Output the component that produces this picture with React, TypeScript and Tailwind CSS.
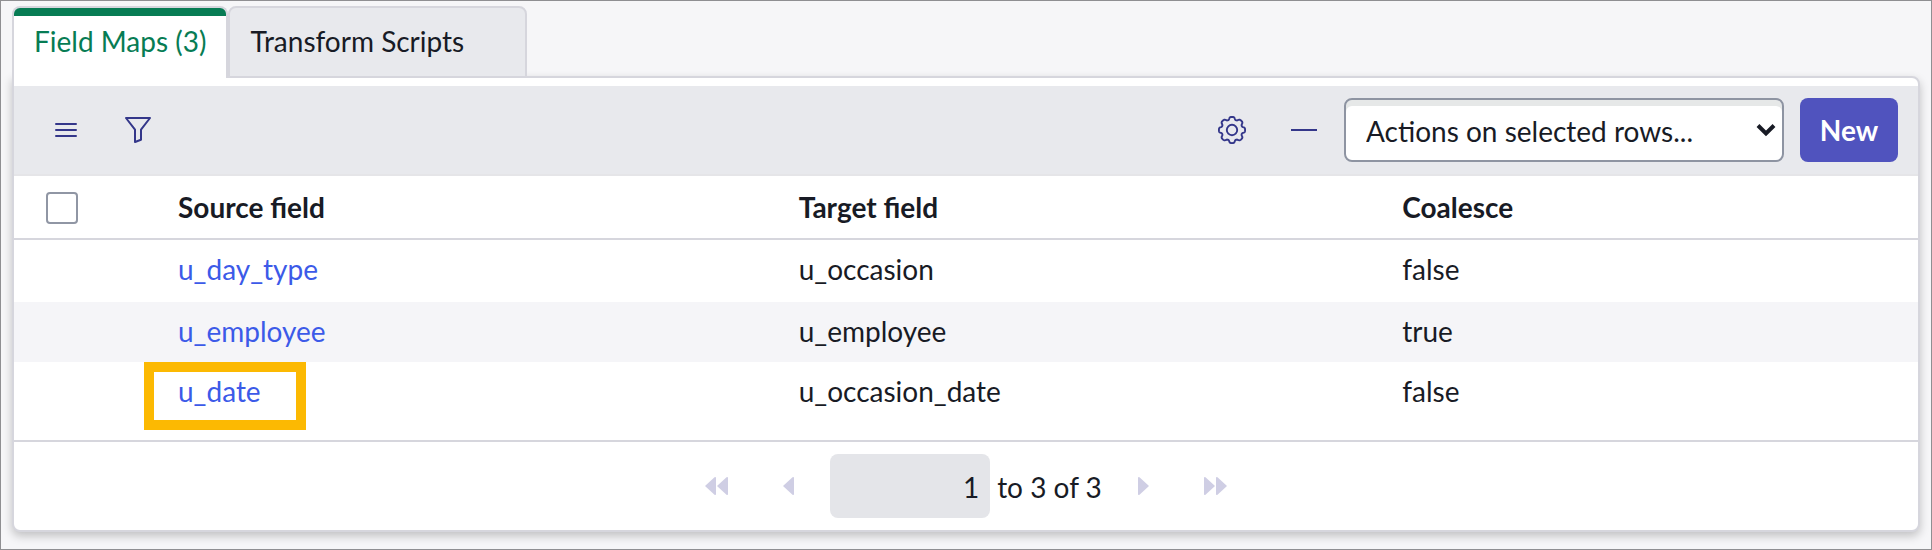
import React, { useState } from "react";
import clsx from "clsx";

type FieldMap = {
  source: string;
  target: string;
  coalesce: string;
  highlighted?: boolean;
};

const fieldMaps: FieldMap[] = [
  { source: "u_day_type", target: "u_occasion", coalesce: "false" },
  { source: "u_employee", target: "u_employee", coalesce: "true" },
  {
    source: "u_date",
    target: "u_occasion_date",
    coalesce: "false",
    highlighted: true,
  },
];

const tabs = [
  { id: "maps", label: "Field Maps (3)" },
  { id: "scripts", label: "Transform Scripts" },
];

// Outline of the cog: eight rounded teeth around the centre
const cogPoints = Array.from({ length: 144 }, (_, i) => {
  const angle = (i / 144) * Math.PI * 2;
  const radius = 11.7 + 1.4 * Math.tanh(1.8 * Math.cos(angle * 8) + 0.6);
  const x = 14 + radius * Math.sin(angle);
  const y = 14 - radius * Math.cos(angle);
  return `${x.toFixed(2)},${y.toFixed(2)}`;
}).join(" ");

const MenuIcon = () => (
  <svg width="22" height="14" viewBox="0 0 22 14" stroke="currentColor" strokeWidth="2" strokeLinecap="round">
    <path d="M1 1h20M1 7h20M1 13h20" />
  </svg>
);

const FilterIcon = () => (
  <svg width="26" height="26" viewBox="0 0 26 26" fill="none" stroke="currentColor" strokeWidth="2" strokeLinejoin="round">
    <path d="M1 1h24L16 12.600v10.200L10 25V12.600z" />
  </svg>
);

const CogIcon = () => (
  <svg width="28" height="28" viewBox="0 0 28 28" fill="none" stroke="currentColor" strokeWidth="1.9" strokeLinejoin="round">
    <polygon points={cogPoints} />
    <circle cx="14" cy="14" r="5.200" />
  </svg>
);

const MinusIcon = () => (
  <svg width="26" height="2" viewBox="0 0 26 2" stroke="currentColor" strokeWidth="2">
    <path d="M0 1h26" />
  </svg>
);

const ArrowIcon = ({ double, flip }: { double?: boolean; flip?: boolean }) => (
  <svg
    width={double ? 23 : 11}
    height="18"
    viewBox={double ? "0 0 23 18" : "0 0 11 18"}
    fill="currentColor"
    className={clsx({ "rotate-180": flip })}
  >
    <path d="M0 9L9.500 0.300Q11 -0.400 11 1V17Q11 18.400 9.500 17.700z" />
    {double && <path d="M12 9L21.500 0.300Q23 -0.400 23 1V17Q23 18.400 21.500 17.700z" />}
  </svg>
);

const Toolbar = () => (
  <div className="mt-2 flex h-[90px] items-center justify-between border-b-2 border-[#e5e5e8] bg-[#e8e9ed] pr-5 pl-[41px] text-[#34378a]">
    <div className="flex items-center gap-12">
      <button type="button" aria-label="List menu">
        <MenuIcon />
      </button>
      <button type="button" aria-label="Filter">
        <FilterIcon />
      </button>
    </div>
    <div className="flex items-center">
      <button type="button" aria-label="Settings" className="mr-[45px]">
        <CogIcon />
      </button>
      <button type="button" aria-label="Collapse" className="mr-[27px] flex h-7 items-center">
        <MinusIcon />
      </button>
      <div className="relative mr-4">
        <select
          aria-label="Actions on selected rows"
          className="h-16 w-[440px] appearance-none rounded-lg border-2 border-[#8e94a2] bg-white pt-0.5 pl-5 text-[#181b25] shadow-[inset_0_6px_0_#e6e8e8]"
        >
          <option>Actions on selected rows...</option>
        </select>
        <svg
          width="20"
          height="14"
          viewBox="0 0 20 14"
          fill="none"
          stroke="#181b25"
          strokeWidth="4"
          className="pointer-events-none absolute top-[25px] right-2"
        >
          <path d="M2 2.500l8 8 8-8" />
        </svg>
      </div>
      <button type="button" className="h-16 w-[98px] rounded-lg bg-[#5053be] font-bold text-white">
        New
      </button>
    </div>
  </div>
);

const FieldMapTable = () => (
  <table className="w-full table-fixed text-left">
    <thead>
      <tr className="h-[63px] border-b-2 border-[#d6d6dd] align-top">
        <th className="w-[164px] pt-4 pb-0 pl-8">
          <input
            type="checkbox"
            aria-label="Select all rows"
            className="block size-8 appearance-none rounded-sm border-2 border-[#9096a4] bg-white"
          />
        </th>
        <th className="w-[32.6%] pt-[11px] font-bold">Source field</th>
        <th className="w-[31.7%] pt-[11px] font-bold">Target field</th>
        <th className="pt-[11px] font-bold">Coalesce</th>
      </tr>
    </thead>
    <tbody>
      {fieldMaps.map((row, index) => (
        <tr
          key={row.source}
          className={clsx("align-top", {
            "h-[63px]": index === 0,
            "h-[60px] bg-[#f5f5f8]": index === 1,
            "h-[78px]": index === 2,
          })}
        >
          <td />
          <td className="relative pt-[9px]">
            <a href="#" className="text-[#3c5ae8]">
              {row.source}
            </a>
            {row.highlighted && (
              <span className="pointer-events-none absolute top-0 -left-[34px] h-[68px] w-[162px] border-10 border-[#fcb902]" />
            )}
          </td>
          <td className="pt-[9px]">{row.target}</td>
          <td className="pt-[9px]">{row.coalesce}</td>
        </tr>
      ))}
    </tbody>
  </table>
);

const Pagination = () => (
  <div className="flex h-[90px] items-center justify-center border-t-2 border-[#d6d6dd] text-[#cfcee4]">
    <button type="button" aria-label="First page" className="mr-[55px]">
      <ArrowIcon double />
    </button>
    <button type="button" aria-label="Previous page" className="mr-9">
      <ArrowIcon />
    </button>
    <input
      type="text"
      aria-label="Go to row"
      defaultValue="1"
      className="h-16 w-40 rounded-lg bg-[#e4e5e9] pt-0.5 pr-[11px] text-right text-[#181b25]"
    />
    <span className="mr-9 ml-[7px] pt-0.5 text-[#181b25]">to 3 of 3</span>
    <button type="button" aria-label="Next page" className="mr-[55px]">
      <ArrowIcon flip />
    </button>
    <button type="button" aria-label="Last page">
      <ArrowIcon double flip />
    </button>
  </div>
);

const App = () => {
  const [activeTab, setActiveTab] = useState("maps");

  return (
    <div className="min-h-screen border border-[#8f8f92] bg-[#f6f6f8] px-[11px] pt-[5px] pb-[17px] font-['Lato',sans-serif] text-[28px] leading-10 text-[#181b25]">
      <div className="relative z-10 -mb-0.5 flex">
        {tabs.map((tab) => (
          <button
            key={tab.id}
            type="button"
            onClick={() => setActiveTab(tab.id)}
            className={clsx(
              "flex h-[72px] items-start rounded-t-lg border-2 border-[#d6d6dd] pt-[13px] pl-5",
              activeTab === tab.id
                ? "border-b-0 bg-[linear-gradient(#077c54_8px,#fff_8px)] pr-5"
                : "bg-[#e8e9ed] pr-[61px]",
              { "text-[#077c54]": activeTab === tab.id }
            )}
          >
            {tab.label}
          </button>
        ))}
      </div>
      <div className="overflow-hidden rounded-b-lg rounded-tr-lg border-2 border-[#d6d6dd] bg-white shadow-[0_4px_10px_rgba(0,0,0,0.22)]">
        <Toolbar />
        <FieldMapTable />
        <Pagination />
      </div>
    </div>
  );
};

export default App;
